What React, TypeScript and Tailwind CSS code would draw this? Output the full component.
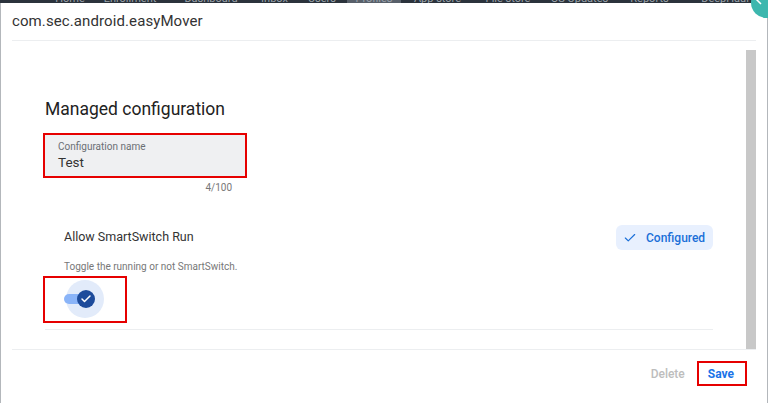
import { Check } from 'lucide-react';

const navItems = [
  { label: 'Home', cls: 'w-[40px]' },
  { label: 'Enrollment', cls: 'w-[80px]' },
  { label: 'Dashboard', cls: 'w-[82px]' },
  { label: 'Inbox', cls: 'w-[45px]' },
  { label: 'Users', cls: 'w-[50px]' },
  { label: 'Profiles', cls: 'w-[54px] bg-[#58606a]' },
  { label: 'App store', cls: 'w-[73px]' },
  { label: 'File store', cls: 'w-[68px]' },
  { label: 'OS Updates', cls: 'w-[75px]' },
  { label: 'Reports', cls: 'w-[65px]' },
  { label: 'DeepHaul', cls: 'w-[86px]' },
];

export default function App() {
  return (
    <div className="relative w-[768px] h-[403px] overflow-hidden bg-white flex flex-col font-['Roboto',sans-serif]">
      {/* top nav strip, almost hidden behind the dialog */}
      <div className="h-[3px] bg-[#2b333c] overflow-hidden flex pl-[50px] shrink-0">
        {navItems.map((n) => (
          <span
            key={n.label}
            className={`shrink-0 text-center text-[11px] leading-[12px] -mt-[7px] pb-[7px] whitespace-nowrap text-[#9aa2aa] ${n.cls}`}
          >
            {n.label}
          </span>
        ))}
      </div>

      <div className="flex-1 flex flex-col border-l border-r border-[#b3b7bb]">
        {/* header */}
        <div className="mx-[11px] h-[38px] flex items-center border-b border-[#eceef0] shrink-0">
          <span className="text-[15px] text-[#333] tracking-[0.1px]">com.sec.android.easyMover</span>
        </div>

        {/* body */}
        <div className="h-[308px] flex shrink-0">
          <div className="flex-1 pl-[44px] flex flex-col">
            <h2 className="mt-[57px] text-[17.5px] leading-[22px] text-[#222]">Managed configuration</h2>

            <div className="mt-[13px] -ml-[2px] w-[204px] h-[45px] border-2 border-[#e60000] bg-[#eff0f2] pl-[13px] pt-[6px]">
              <div className="text-[10px] leading-[12px] text-[#6b6f74]">Configuration name</div>
              <div className="text-[13.5px] leading-[17px] text-[#333] mt-[1px]">Test</div>
            </div>
            <div className="-ml-[2px] w-[204px] text-right pr-[15px] mt-[4px] text-[10px] leading-[12px] text-[#777]">
              4/100
            </div>

            <div className="w-[668px] border-b border-[#eceef0] pb-[11px]">
              <div className="mt-[31px] flex items-center justify-between h-[25px]">
                <span className="pl-[19px] text-[12.5px] text-[#333]">Allow SmartSwitch Run</span>
                <span className="h-[25px] w-[97px] rounded-[6px] bg-[#e8f0fe] flex items-center pl-[7px] gap-[9px] text-[#1a6fd8] text-[12px] font-medium">
                  <Check size={14} strokeWidth={2} />
                  Configured
                </span>
              </div>
              <div className="mt-[11px] pl-[19px] text-[10px] leading-[12px] text-[#777]">
                Toggle the running or not SmartSwitch.
              </div>

              <div className="mt-[7px] ml-[19px] relative h-[38px] w-[40px] flex items-center">
                <span className="absolute left-[2px] top-0 w-[38px] h-[38px] rounded-full bg-[#e2ebfa]" />
                <span className="relative w-[29px] h-[10px] rounded-full bg-[#8ab4f8]" />
                <span className="absolute left-[13px] top-[10px] w-[18px] h-[18px] rounded-full bg-[#1d4b9b] flex items-center justify-center text-white">
                  <Check size={12} strokeWidth={3} />
                </span>
                <span className="absolute -left-[21px] -top-[4px] w-[84px] h-[47px] border-2 border-[#e60000]" />
              </div>
            </div>
          </div>
          <div className="w-[10px] mt-[9px] mr-[11px] bg-[#c8c8c8]" />
        </div>

        {/* footer */}
        <div className="mx-[11px] border-t border-[#eceef0] flex justify-end items-center pt-[11px] pr-[9px]">
          <span className="text-[12px] font-medium text-[#bdbdbd] mr-[12px]">Delete</span>
          <span className="h-[25px] border-2 border-[#e60000] pl-[9px] pr-[11px] flex items-center text-[12px] font-bold text-[#1a73e8]">
            Save
          </span>
        </div>
      </div>

      {/* close button peeking in top right */}
      <div className="absolute -right-[14px] -top-[13px] w-[31px] h-[31px] rounded-full bg-[#3db7ae] flex items-center pl-[4px] text-white">
        <svg width="8" height="10" viewBox="0 0 8 10" fill="none" stroke="white" strokeWidth="1.5">
          <path d="M1 1 L6 6" />
        </svg>
      </div>
    </div>
  );
}
